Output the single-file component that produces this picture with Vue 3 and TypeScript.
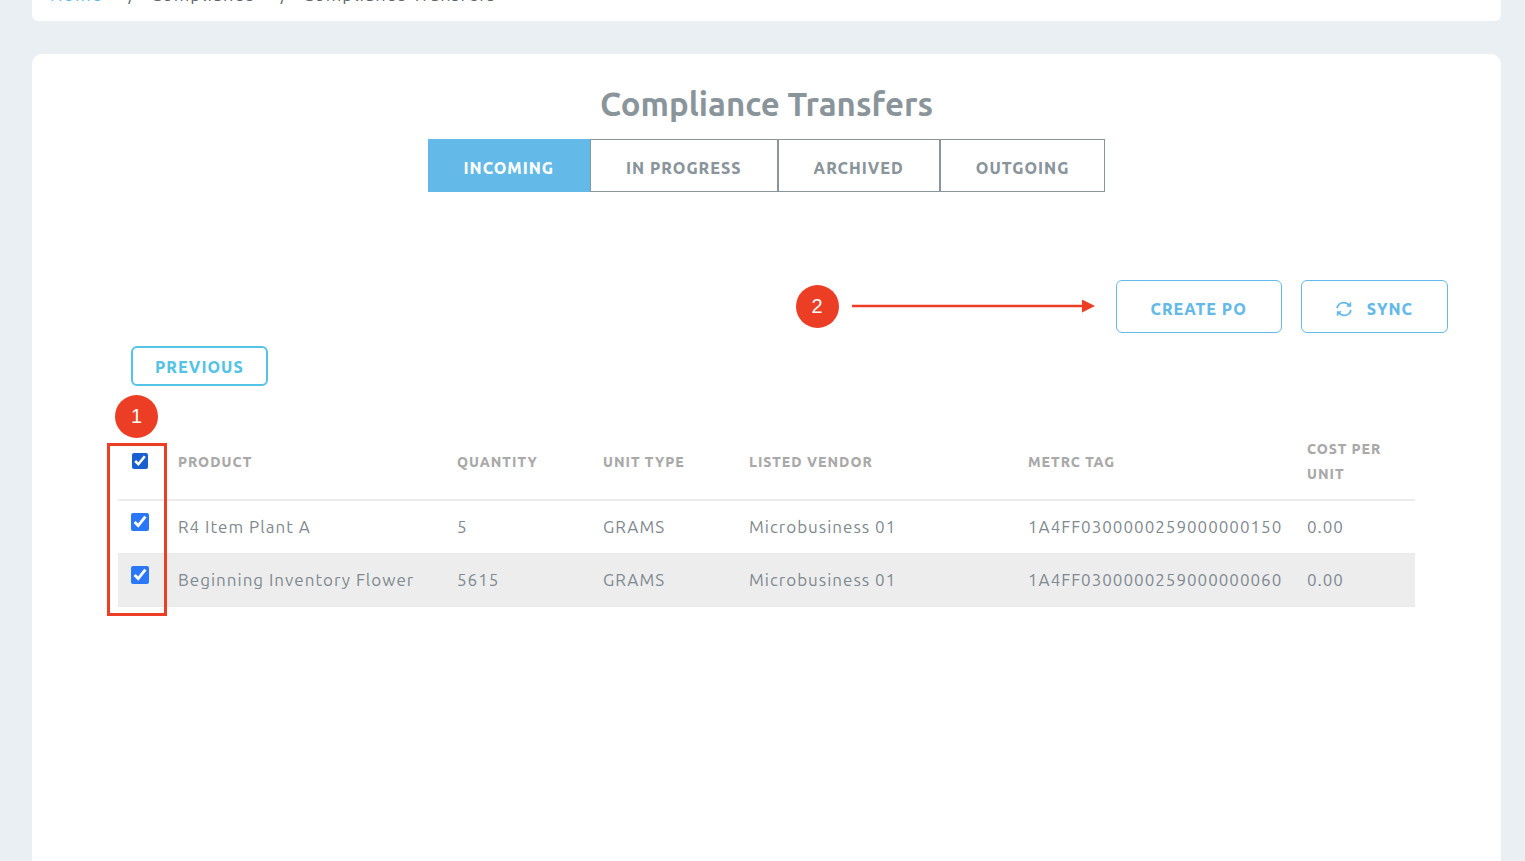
<script setup lang="ts">
import { ref, computed } from 'vue'

interface Transfer {
  product: string
  quantity: number
  unit: string
  vendor: string
  tag: string
  cost: string
  selected: boolean
}

const tabs = ['Incoming', 'In Progress', 'Archived', 'Outgoing']
const activeTab = ref('Incoming')

const rows = ref<Transfer[]>([
  { product: 'R4 Item Plant A', quantity: 5, unit: 'GRAMS', vendor: 'Microbusiness 01', tag: '1A4FF0300000259000000150', cost: '0.00', selected: true },
  { product: 'Beginning Inventory Flower', quantity: 5615, unit: 'GRAMS', vendor: 'Microbusiness 01', tag: '1A4FF0300000259000000060', cost: '0.00', selected: true },
])

const allSelected = computed({
  get: () => rows.value.every((r) => r.selected),
  set: (value: boolean) => rows.value.forEach((r) => (r.selected = value)),
})
</script>

<template>
  <div class="page">
    <nav class="crumbs" aria-label="Breadcrumb">
      <a href="#">Home</a><span class="sep">/</span><span>Compliance</span><span class="sep">/</span><span>Compliance Transfers</span>
    </nav>

    <main class="card">
      <h1>Compliance Transfers</h1>
      <div class="tabs">
        <button v-for="tab in tabs" :key="tab" type="button" :class="{ active: tab === activeTab }" @click="activeTab = tab">{{ tab }}</button>
      </div>

      <div class="actions">
        <span class="marker">2</span>
        <svg class="arrow" width="243" height="14" viewBox="0 0 243 14" aria-hidden="true">
          <path d="M0 6H231" stroke="#ec3d25" stroke-width="2.6" />
          <path d="M230 -.5L243 6L230 12.5Z" fill="#ec3d25" />
        </svg>
        <button type="button" class="action">Create PO</button>
        <button type="button" class="action">
          <svg class="sync" width="16" height="16" viewBox="0 0 16 16" aria-hidden="true">
            <path d="M1.2 7.2C1.6 3.9 4.4 1.6 7.7 1.6C9.9 1.6 11.8 2.6 13 4.2M14.8 8.8C14.4 12.1 11.6 14.4 8.3 14.4C6.1 14.4 4.2 13.4 3 11.8" fill="none" stroke="currentColor" stroke-width="1.9" />
            <path d="M15.2 .6V5.8H10.2ZM.8 15.4V10.2H5.8Z" fill="currentColor" />
          </svg>
          Sync
        </button>
      </div>

      <button type="button" class="previous">Previous</button>

      <section class="list">
        <div class="highlight" aria-hidden="true"><span class="marker">1</span></div>
        <table>
          <colgroup>
            <col class="c-check" /><col class="c-wide" /><col class="c-narrow" /><col class="c-narrow" /><col class="c-wide" /><col class="c-wide" /><col class="c-last" />
          </colgroup>
          <thead>
            <tr>
              <th class="check"><input v-model="allSelected" type="checkbox" class="all" aria-label="Select all" /></th>
              <th>Product</th>
              <th>Quantity</th>
              <th>Unit Type</th>
              <th>Listed Vendor</th>
              <th>Metrc Tag</th>
              <th>Cost Per Unit</th>
            </tr>
          </thead>
          <tbody>
            <tr v-for="row in rows" :key="row.tag">
              <td class="check"><input v-model="row.selected" type="checkbox" :aria-label="row.product" /></td>
              <td>{{ row.product }}</td>
              <td>{{ row.quantity }}</td>
              <td>{{ row.unit }}</td>
              <td>{{ row.vendor }}</td>
              <td>{{ row.tag }}</td>
              <td>{{ row.cost }}</td>
            </tr>
          </tbody>
        </table>
      </section>
    </main>
  </div>
</template>

<style>
body {
  margin: 0;
  background: #eaeff3;
}
</style>

<style scoped>
.page {
  box-sizing: border-box;
  min-height: 100vh;
  padding: 0 24px 0 32px;
  display: flex;
  flex-direction: column;
  overflow: hidden;
  font-family: Ubuntu, "Noto Sans", sans-serif;
  font-size: 17px;
  letter-spacing: 1px;
  color: #7f8990;
}
button {
  font-family: inherit;
  font-size: 16px;
  font-weight: 800;
  letter-spacing: 1px;
  text-transform: uppercase;
  cursor: pointer;
  background: #fff;
}
.crumbs {
  display: flex;
  gap: 14px;
  margin-top: -40px;
  padding: 22px 18px 15px;
  font-size: 18px;
  line-height: 24px;
  background: #fff;
  border-radius: 0 0 6px 6px;
  color: #5f666b;
}
.crumbs a {
  color: #62b9e8;
  text-decoration: none;
}
.sep {
  margin-left: 12px;
}
.card {
  flex: 1;
  margin-top: 33px;
  padding: 30px 53px 40px 86px;
  background: #fff;
  border-radius: 10px 10px 0 0;
}
h1 {
  margin: 0 0 15px -33px;
  text-align: center;
  font-size: 33px;
  line-height: 40px;
  font-weight: 600;
  letter-spacing: 0;
  color: #8a949b;
}
.tabs {
  display: flex;
  justify-content: center;
  margin-left: -33px;
}
.tabs button {
  height: 53px;
  padding: 4px 35px 0;
  border: 1px solid #8a949b;
  color: #8a949b;
}
.tabs button.active {
  background: #63b9e8;
  border-color: #63b9e8;
  color: #fff;
}
.actions {
  display: flex;
  justify-content: flex-end;
  align-items: center;
  margin-top: 88px;
}
.marker {
  display: flex;
  align-items: center;
  justify-content: center;
  width: 43px;
  height: 43px;
  border-radius: 50%;
  background: #ec3d25;
  color: #fff;
  font-family: "Liberation Sans", Arial, sans-serif;
  font-size: 20px;
  letter-spacing: 0;
}
.arrow {
  margin: 0 21px 0 13px;
}
.action {
  display: flex;
  align-items: center;
  justify-content: center;
  height: 53px;
  padding: 4px 34px 0;
  border: 1px solid #63b9e8;
  border-radius: 6px;
  color: #63b9e8;
}
.action + .action {
  margin-left: 19px;
}
.sync {
  margin-right: 15px;
}
.previous {
  display: block;
  height: 40px;
  margin: 13px 0 0 13px;
  padding: 1px 22px 0;
  border: 2px solid #54c3e6;
  border-radius: 6px;
  color: #54c3e6;
}
.list {
  position: relative;
  margin-top: 37px;
  margin-right: 33px;
}
.highlight {
  position: absolute;
  top: 20px;
  left: -11px;
  box-sizing: border-box;
  width: 60px;
  height: 173px;
  border: 3px solid #ec3d25;
  pointer-events: none;
}
.highlight .marker {
  position: absolute;
  top: -51px;
  left: 5px;
}
table {
  width: 100%;
  table-layout: fixed;
  border-collapse: collapse;
  text-align: left;
}
.c-check { width: 46px; }
.c-wide { width: 279px; }
.c-narrow { width: 146px; }
th {
  height: 50px;
  padding: 14px 12px 12px 14px;
  border-bottom: 2px solid #ebebeb;
  font-size: 14px;
  line-height: 25px;
  font-weight: 800;
  text-transform: uppercase;
  color: #a9a9a9;
}
td {
  height: 52px;
  padding: 0 12px 0 14px;
  border-bottom: 1px solid #e9e9e9;
  line-height: 24px;
  white-space: nowrap;
}
tbody tr:nth-child(even) {
  background: #ededed;
}
.check {
  padding-left: 13px;
  line-height: 0;
}
th.check {
  height: 48px;
  padding-bottom: 14px;
}
td.check {
  height: 42px;
  padding-bottom: 10px;
}
input {
  width: 18px;
  height: 18px;
  margin: 0;
  accent-color: #2a78f8;
}
input.all {
  width: 16px;
  height: 16px;
  margin: 0 1px;
  accent-color: #1a5fd0;
}
</style>
